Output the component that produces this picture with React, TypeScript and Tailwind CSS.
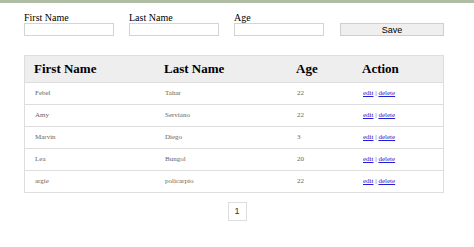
const rows = [
  { first: "Febel", last: "Tahar", age: "22" },
  { first: "Amy", last: "Serviano", age: "22" },
  { first: "Marvin", last: "Diego", age: "3" },
  { first: "Lea", last: "Bungol", age: "20" },
  { first: "argie", last: "policarpio", age: "22" },
];

function Field({ label }: { label: string }) {
  return (
    <label className="flex flex-col">
      <span className="text-[10px] leading-[11px] text-black">{label}</span>
      <input type="text" className="h-[13px] w-[90px] border border-[#d4d4d4] bg-white outline-none" />
    </label>
  );
}

export default function App() {
  return (
    <div className="min-h-[247px] w-[474px] bg-white font-['Liberation_Serif',serif]">
      <div className="h-[3px] bg-[#aebda4]" />
      <div className="flex items-end pl-[24px] pt-[9px]">
        <div className="flex gap-[15px]">
          <Field label="First Name" />
          <Field label="Last Name" />
          <Field label="Age" />
        </div>
        <button
          type="button"
          className="ml-[16px] h-[13px] w-[104px] border border-[#cfcfcf] bg-[#efefef] font-['Liberation_Sans',sans-serif] text-[9px] leading-[10px] text-black"
        >
          Save
        </button>
      </div>

      <div className="mx-[24px] mt-[19px] w-[420px] border border-[#dddddd]">
        <table className="w-full border-collapse text-left">
          <thead>
            <tr className="h-[26px] bg-[#eeeeee] text-[13px] font-bold text-black">
              <th className="w-[130px] pl-[9px]">First Name</th>
              <th className="w-[132px] pl-[9px]">Last Name</th>
              <th className="w-[66px] pl-[9px]">Age</th>
              <th className="pl-[9px]">Action</th>
            </tr>
          </thead>
          <tbody className="text-[7px] text-[#666666]">
            {rows.map((r) => (
              <tr key={r.first} className="h-[22px] border-t border-[#dddddd]">
                <td className="pl-[10px]">{r.first}</td>
                <td className="pl-[10px]">{r.last}</td>
                <td className="pl-[10px]">{r.age}</td>
                <td className="pl-[10px] text-[#2020d0]">
                  <a href="#" className="underline">edit</a> |{" "}
                  <a href="#" className="underline">delete</a>
                </td>
              </tr>
            ))}
          </tbody>
        </table>
      </div>

      <div className="mt-[9px] flex justify-center">
        <span className="flex h-[19px] w-[19px] items-center justify-center border border-[#dddddd] font-['Liberation_Sans',sans-serif] text-[9px] text-[#333333]">
          1
        </span>
      </div>
    </div>
  );
}
